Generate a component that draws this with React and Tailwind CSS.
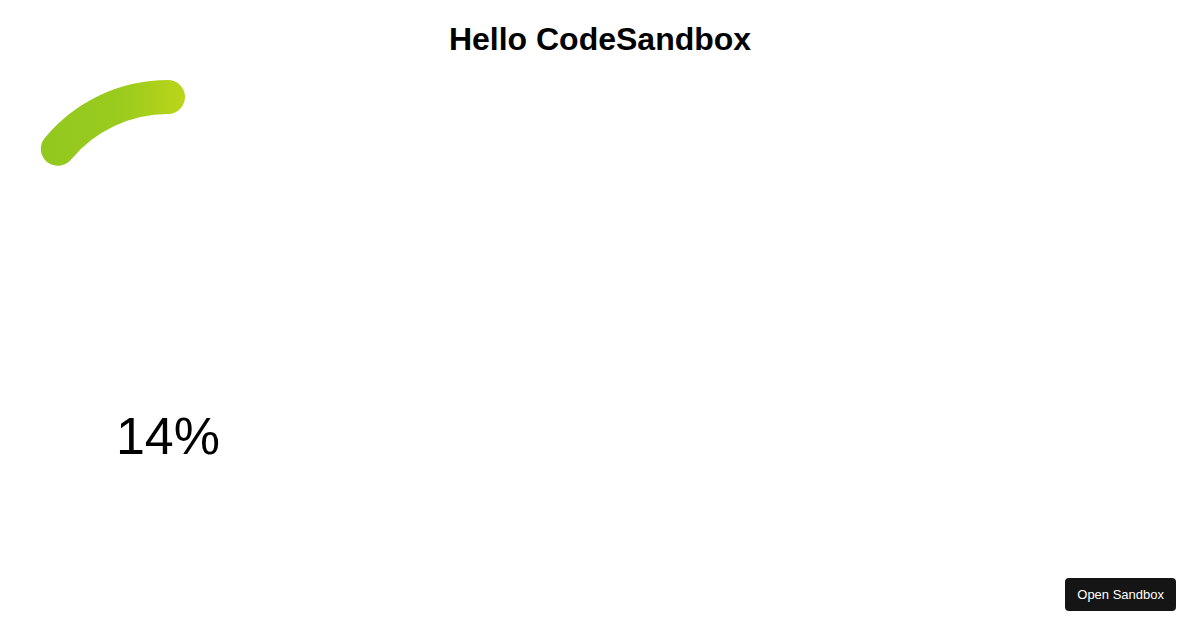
import React from 'react';

const progress = 14;

// circular progress drawn counter-clockwise from the top
function ProgressRing({ value }) {
  const size = 320;
  const stroke = 34;
  const r = (size - stroke) / 2;
  const cx = size / 2;
  const a = (value / 100) * 2 * Math.PI;
  const ex = cx - r * Math.sin(a);
  const ey = cx - r * Math.cos(a);
  const large = value > 50 ? 1 : 0;
  const d = `M ${cx} ${cx - r} A ${r} ${r} 0 ${large} 0 ${ex} ${ey}`;

  return (
    <svg width={size} height={size} viewBox={`0 0 ${size} ${size}`} className="block">
      <defs>
        <linearGradient id="ring" gradientUnits="userSpaceOnUse" x1="32" y1="0" x2="178" y2="0">
          <stop offset="0" stopColor="#92c81f" />
          <stop offset="0.55" stopColor="#9acb1d" />
          <stop offset="1" stopColor="#bcd51a" />
        </linearGradient>
      </defs>
      <path d={d} fill="none" stroke="url(#ring)" strokeWidth={stroke} strokeLinecap="round" />
    </svg>
  );
}

export default function App() {
  return (
    <div className="min-h-screen bg-white text-black font-['Liberation_Sans',Arial,sans-serif]">
      <h1 className="text-center text-[32px] font-bold leading-[1.15] pt-[21px]">Hello CodeSandbox</h1>

      <div className="w-[320px] ml-[8px] mt-[22px]">
        <ProgressRing value={progress} />
        <div className="text-center text-[52px] leading-[1.15] mt-[7px]">{progress}%</div>
      </div>

      <button className="fixed right-[24px] bottom-[19px] h-[33px] px-[12px] rounded-[4px] bg-[#151515] text-white text-[13px]">
        Open Sandbox
      </button>
    </div>
  );
}
